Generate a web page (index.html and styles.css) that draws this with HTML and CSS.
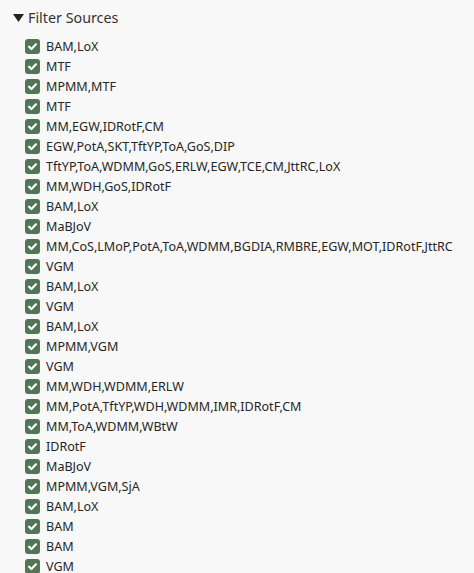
FILE: index.html
```html
<!DOCTYPE html>
<html>
<head>
<meta charset="utf-8">
<link rel="stylesheet" href="styles.css">
</head>
<body>
<div class="panel">
  <div class="title"><svg class="tri" viewBox="0 0 11 8"><path d="M0 0h11L5.5 8z"/></svg>Filter Sources</div>
  <ul class="list">
    <li><span class="cb"><svg viewBox="0 0 14 14"><path d="M3.8 7.2l2.2 2.2 4.2-4.4"/></svg></span>BAM,LoX</li>
    <li><span class="cb"><svg viewBox="0 0 14 14"><path d="M3.8 7.2l2.2 2.2 4.2-4.4"/></svg></span>MTF</li>
    <li><span class="cb"><svg viewBox="0 0 14 14"><path d="M3.8 7.2l2.2 2.2 4.2-4.4"/></svg></span>MPMM,MTF</li>
    <li><span class="cb"><svg viewBox="0 0 14 14"><path d="M3.8 7.2l2.2 2.2 4.2-4.4"/></svg></span>MTF</li>
    <li><span class="cb"><svg viewBox="0 0 14 14"><path d="M3.8 7.2l2.2 2.2 4.2-4.4"/></svg></span>MM,EGW,IDRotF,CM</li>
    <li><span class="cb"><svg viewBox="0 0 14 14"><path d="M3.8 7.2l2.2 2.2 4.2-4.4"/></svg></span>EGW,PotA,SKT,TftYP,ToA,GoS,DIP</li>
    <li><span class="cb"><svg viewBox="0 0 14 14"><path d="M3.8 7.2l2.2 2.2 4.2-4.4"/></svg></span>TftYP,ToA,WDMM,GoS,ERLW,EGW,TCE,CM,JttRC,LoX</li>
    <li><span class="cb"><svg viewBox="0 0 14 14"><path d="M3.8 7.2l2.2 2.2 4.2-4.4"/></svg></span>MM,WDH,GoS,IDRotF</li>
    <li><span class="cb"><svg viewBox="0 0 14 14"><path d="M3.8 7.2l2.2 2.2 4.2-4.4"/></svg></span>BAM,LoX</li>
    <li><span class="cb"><svg viewBox="0 0 14 14"><path d="M3.8 7.2l2.2 2.2 4.2-4.4"/></svg></span>MaBJoV</li>
    <li><span class="cb"><svg viewBox="0 0 14 14"><path d="M3.8 7.2l2.2 2.2 4.2-4.4"/></svg></span>MM,CoS,LMoP,PotA,ToA,WDMM,BGDIA,RMBRE,EGW,MOT,IDRotF,JttRC</li>
    <li><span class="cb"><svg viewBox="0 0 14 14"><path d="M3.8 7.2l2.2 2.2 4.2-4.4"/></svg></span>VGM</li>
    <li><span class="cb"><svg viewBox="0 0 14 14"><path d="M3.8 7.2l2.2 2.2 4.2-4.4"/></svg></span>BAM,LoX</li>
    <li><span class="cb"><svg viewBox="0 0 14 14"><path d="M3.8 7.2l2.2 2.2 4.2-4.4"/></svg></span>VGM</li>
    <li><span class="cb"><svg viewBox="0 0 14 14"><path d="M3.8 7.2l2.2 2.2 4.2-4.4"/></svg></span>BAM,LoX</li>
    <li><span class="cb"><svg viewBox="0 0 14 14"><path d="M3.8 7.2l2.2 2.2 4.2-4.4"/></svg></span>MPMM,VGM</li>
    <li><span class="cb"><svg viewBox="0 0 14 14"><path d="M3.8 7.2l2.2 2.2 4.2-4.4"/></svg></span>VGM</li>
    <li><span class="cb"><svg viewBox="0 0 14 14"><path d="M3.8 7.2l2.2 2.2 4.2-4.4"/></svg></span>MM,WDH,WDMM,ERLW</li>
    <li><span class="cb"><svg viewBox="0 0 14 14"><path d="M3.8 7.2l2.2 2.2 4.2-4.4"/></svg></span>MM,PotA,TftYP,WDH,WDMM,IMR,IDRotF,CM</li>
    <li><span class="cb"><svg viewBox="0 0 14 14"><path d="M3.8 7.2l2.2 2.2 4.2-4.4"/></svg></span>MM,ToA,WDMM,WBtW</li>
    <li><span class="cb"><svg viewBox="0 0 14 14"><path d="M3.8 7.2l2.2 2.2 4.2-4.4"/></svg></span>IDRotF</li>
    <li><span class="cb"><svg viewBox="0 0 14 14"><path d="M3.8 7.2l2.2 2.2 4.2-4.4"/></svg></span>MaBJoV</li>
    <li><span class="cb"><svg viewBox="0 0 14 14"><path d="M3.8 7.2l2.2 2.2 4.2-4.4"/></svg></span>MPMM,VGM,SjA</li>
    <li><span class="cb"><svg viewBox="0 0 14 14"><path d="M3.8 7.2l2.2 2.2 4.2-4.4"/></svg></span>BAM,LoX</li>
    <li><span class="cb"><svg viewBox="0 0 14 14"><path d="M3.8 7.2l2.2 2.2 4.2-4.4"/></svg></span>BAM</li>
    <li><span class="cb"><svg viewBox="0 0 14 14"><path d="M3.8 7.2l2.2 2.2 4.2-4.4"/></svg></span>BAM</li>
    <li><span class="cb"><svg viewBox="0 0 14 14"><path d="M3.8 7.2l2.2 2.2 4.2-4.4"/></svg></span>VGM</li>
  </ul>
</div>
</body>
</html>
```
FILE: styles.css
```css
html, body {
  margin: 0;
  padding: 0;
  background: #f8f8f8;
}
body {
  font-family: "Noto Sans", "Open Sans", sans-serif;
  color: #262626;
  overflow: hidden;
  height: 573px;
}
.panel {
  padding: 8px 0 0 13px;
}
.title {
  font-size: 14.3px;
  line-height: 20px;
  color: #333;
  display: flex;
  align-items: center;
}
.tri {
  width: 11px;
  height: 8px;
  margin-right: 4px;
  fill: #222;
  flex: none;
}
.list {
  list-style: none;
  margin: 8px 0 0 0;
  padding: 0 0 0 12px;
}
.list li {
  display: flex;
  align-items: center;
  height: 20px;
  font-size: 12.55px;
  white-space: nowrap;
}
.cb {
  width: 15px;
  height: 15px;
  border-radius: 3px;
  background: #527555;
  margin-right: 6px;
  flex: none;
  display: flex;
}
.cb svg {
  width: 15px;
  height: 15px;
  fill: none;
  stroke: #fff;
  stroke-width: 2;
  stroke-linecap: round;
  stroke-linejoin: round;
}
```
